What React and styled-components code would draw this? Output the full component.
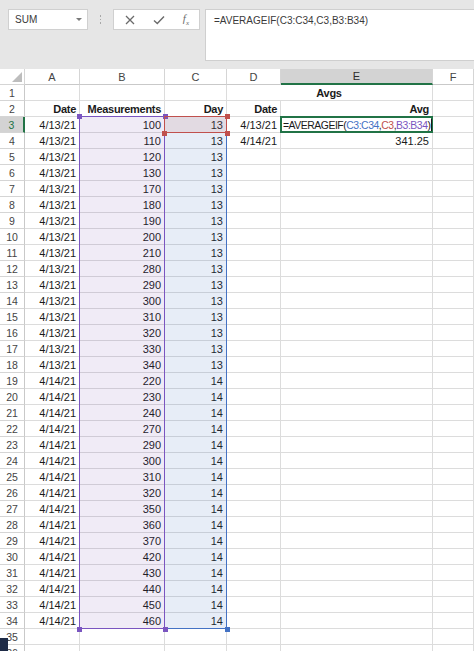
import React from "react";
import styled, { createGlobalStyle } from "styled-components";

const GlobalStyle = createGlobalStyle`
  html, body {
    margin: 0;
    padding: 0;
    background: #ffffff;
  }
  body {
    font-family: "Liberation Sans", Arial, sans-serif;
  }
`;

const GREEN = "#217346";
const BLUE = "#4472c4";
const RED = "#c0504d";
const PURPLE = "#7a55c0";

const measurements = [
  100, 110, 120, 130, 170, 180, 190, 200, 210, 280, 290, 300, 310, 320, 330,
  340, 220, 230, 240, 270, 290, 300, 310, 320, 350, 360, 370, 420, 430, 440,
  450, 460,
];

const COLUMNS = ["A", "B", "C", "D", "E", "F"];
const LAST_ROW = 36;

// value of each cell
function cellValue(c, r) {
  if (r === 2) {
    return { A: "Date", B: "Measurements", C: "Day", D: "Date", E: "Avg" }[c];
  }
  if (r >= 3 && r <= 34) {
    const first = r <= 18;
    if (c === "A") return first ? "4/13/21" : "4/14/21";
    if (c === "B") return measurements[r - 3];
    if (c === "C") return first ? 13 : 14;
    if (c === "D" && r === 3) return "4/13/21";
    if (c === "D" && r === 4) return "4/14/21";
    if (c === "E" && r === 4) return "341.25";
  }
  return null;
}

export default function App() {
  const rows = [];
  for (let r = 1; r <= LAST_ROW; r++) rows.push(r);

  return (
    <Screen>
      <GlobalStyle />
      <FormulaBar>
        <NameBox>
          <span>SUM</span>
          <Caret />
        </NameBox>
        <Grip>
          <i />
          <i />
          <i />
        </Grip>
        <FnButtons>
          <svg width="10" height="10" viewBox="0 0 10 10">
            <path d="M1 1L9 9M9 1L1 9" stroke="#6b6b6b" strokeWidth="1.3" fill="none" />
          </svg>
          <svg width="12" height="10" viewBox="0 0 12 10">
            <path d="M1 5.5L4.3 8.6L11 1.4" stroke="#6b6b6b" strokeWidth="1.4" fill="none" />
          </svg>
          <FxLabel>
            f<sub>x</sub>
          </FxLabel>
        </FnButtons>
        <FormulaInput>=AVERAGEIF(C3:C34,C3,B3:B34)</FormulaInput>
      </FormulaBar>

      <Sheet>
        <Corner>
          <svg width="10" height="10" viewBox="0 0 10 10">
            <path d="M10 0V10H0Z" fill="#bdbdbd" />
          </svg>
        </Corner>
        {COLUMNS.map((c, i) => (
          <ColHead key={c} $col={i + 2} $selected={c === "E"}>
            {c}
          </ColHead>
        ))}

        {rows.map((r) => (
          <React.Fragment key={r}>
            <RowHead $row={r + 1} $selected={r === 3}>
              {r}
            </RowHead>
            {r === 1 ? (
              <>
                <Cell $row={2} $col="2" />
                <Cell $row={2} $col="3" />
                <Cell $row={2} $col="4" />
                <Cell $row={2} $col="5 / 7" $align="center" $bold>
                  Avgs
                </Cell>
                <Cell $row={2} $col="7" />
              </>
            ) : (
              COLUMNS.map((c, i) => (
                <Cell key={c} $row={r + 1} $col={String(i + 2)} $bold={r === 2}>
                  {cellValue(c, r)}
                </Cell>
              ))
            )}
          </React.Fragment>
        ))}

        <Range $color={BLUE} $fill="rgba(68,114,196,0.13)" $col="4" $row="4 / 36">
          <Handle $color={BLUE} $v="bottom" $h="right" />
        </Range>
        <Range $color={PURPLE} $fill="rgba(112,60,170,0.1)" $col="3" $row="4 / 36">
          <Handle $color={PURPLE} $v="top" $h="left" />
          <Handle $color={PURPLE} $v="top" $h="right" />
          <Handle $color={PURPLE} $v="bottom" $h="left" />
          <Handle $color={PURPLE} $v="bottom" $h="right" />
        </Range>
        <Range $color={RED} $fill="rgba(192,80,77,0.12)" $col="4" $row="4">
          <Handle $color={RED} $v="top" $h="right" />
          <Handle $color={RED} $v="bottom" $h="left" />
          <Handle $color={RED} $v="bottom" $h="right" />
        </Range>
        <ActiveCell>
          <InCellFormula>
            =AVERAGEIF(<Ref $color={BLUE}>C3:C34</Ref>,<Ref $color={RED}>C3</Ref>,
            <Ref $color={PURPLE}>B3:B34</Ref>)<Cursor />
          </InCellFormula>
        </ActiveCell>
      </Sheet>

      <TaskbarCorner />
    </Screen>
  );
}

const Screen = styled.div`
  position: relative;
  width: 474px;
  height: 651px;
  overflow: hidden;
  background: #ffffff;
  color: #1a1a1a;
`;

const FormulaBar = styled.div`
  display: flex;
  align-items: flex-start;
  box-sizing: border-box;
  height: 69px;
  padding: 9px 0 8px 8px;
  background: #e6e6e6;
`;

const NameBox = styled.div`
  display: flex;
  align-items: center;
  justify-content: space-between;
  box-sizing: border-box;
  width: 80px;
  height: 21px;
  padding: 0 5px 0 6px;
  background: #ffffff;
  border: 1px solid #d0d0d0;
  font-size: 10px;
  color: #3a3a3a;
`;

const Caret = styled.span`
  width: 0;
  height: 0;
  border-left: 3px solid transparent;
  border-right: 3px solid transparent;
  border-top: 3px solid #7a7a7a;
`;

const Grip = styled.div`
  display: flex;
  flex-direction: column;
  align-items: center;
  gap: 2px;
  width: 25px;
  padding-top: 6px;

  i {
    width: 1.5px;
    height: 1.5px;
    background: #a8a8a8;
  }
`;

const FnButtons = styled.div`
  display: flex;
  align-items: center;
  justify-content: space-between;
  box-sizing: border-box;
  width: 87px;
  height: 21px;
  padding: 0 10px 0 11px;
  background: #ffffff;
  border: 1px solid #d0d0d0;
`;

const FxLabel = styled.span`
  font-family: "Liberation Serif", "Times New Roman", serif;
  font-style: italic;
  font-size: 11px;
  color: #6b6b6b;

  sub {
    font-size: 7px;
  }
`;

const FormulaInput = styled.div`
  flex: 1;
  box-sizing: border-box;
  height: 52px;
  margin-left: 5px;
  padding: 4px 8px;
  background: #ffffff;
  border: 1px solid #cfcfcf;
  border-right: none;
  font-size: 10px;
  line-height: 14px;
  color: #3a3a3a;
  white-space: nowrap;
`;

const Sheet = styled.div`
  display: grid;
  grid-template-columns: 25px 55px 85px 62px 54px 152px 1fr;
  grid-auto-rows: 16px;
  font-size: 11px;
`;

const headBase = `
  display: flex;
  align-items: center;
  justify-content: center;
  box-sizing: border-box;
  border-right: 1px solid #d5d5d5;
  border-bottom: 1px solid #d5d5d5;
  color: #444444;
  font-size: 11px;
`;

const Corner = styled.div`
  ${headBase}
  grid-column: 1;
  grid-row: 1;
  justify-content: flex-end;
  align-items: flex-end;
  padding: 0 2px 2px 0;
  background: #ffffff;
`;

const ColHead = styled.div`
  ${headBase}
  grid-column: ${(p) => p.$col};
  grid-row: 1;
  background: ${(p) => (p.$selected ? "#d3d3d3" : "#ffffff")};
  color: ${(p) => (p.$selected ? "#2b2b2b" : "#444444")};
  border-bottom: ${(p) => (p.$selected ? `2px solid ${GREEN}` : "1px solid #c9c9c9")};
`;

const RowHead = styled.div`
  ${headBase}
  grid-column: 1;
  grid-row: ${(p) => p.$row};
  font-size: 10.5px;
  background: ${(p) => (p.$selected ? "#d3d3d3" : "#ffffff")};
  color: ${(p) => (p.$selected ? GREEN : "#444444")};
  border-right: ${(p) => (p.$selected ? `2px solid ${GREEN}` : "1px solid #c9c9c9")};
`;

const Cell = styled.div`
  grid-column: ${(p) => p.$col};
  grid-row: ${(p) => p.$row};
  box-sizing: border-box;
  padding: 0 3px 0 2px;
  border-right: 1px solid #dcdcdc;
  border-bottom: 1px solid #dcdcdc;
  line-height: 16px;
  text-align: ${(p) => p.$align || "right"};
  font-weight: ${(p) => (p.$bold ? 700 : 400)};
  letter-spacing: ${(p) => (p.$bold ? "-0.3px" : "0")};
  color: #1a1a1a;
  white-space: nowrap;
`;

const Range = styled.div`
  grid-column: ${(p) => p.$col};
  grid-row: ${(p) => p.$row};
  position: relative;
  z-index: 2;
  margin: -1px 0 0 -1px;
  box-sizing: border-box;
  border: 1.5px solid ${(p) => p.$color};
  background: ${(p) => p.$fill};
  pointer-events: none;
`;

const Handle = styled.span`
  position: absolute;
  width: 5px;
  height: 5px;
  background: ${(p) => p.$color};
  ${(p) => p.$v}: -3.5px;
  ${(p) => p.$h}: -3.5px;
`;

const ActiveCell = styled.div`
  grid-column: 6;
  grid-row: 4;
  position: relative;
  z-index: 3;
  margin: -1px 0 0 -1px;
  box-sizing: border-box;
  border: 2px solid ${GREEN};
  background: #ffffff;
  display: flex;
  align-items: center;
`;

const InCellFormula = styled.span`
  padding-left: 1px;
  font-size: 10.4px;
  letter-spacing: -0.45px;
  color: #1a1a1a;
  white-space: nowrap;
`;

const Ref = styled.span`
  color: ${(p) => p.$color};
`;

const Cursor = styled.span`
  display: inline-block;
  width: 1px;
  height: 12px;
  margin-left: 1px;
  vertical-align: -2px;
  background: #1a1a1a;
`;

const TaskbarCorner = styled.div`
  position: absolute;
  left: 0;
  bottom: 0;
  width: 8px;
  height: 13px;
  background: #1f2b46;
`;
